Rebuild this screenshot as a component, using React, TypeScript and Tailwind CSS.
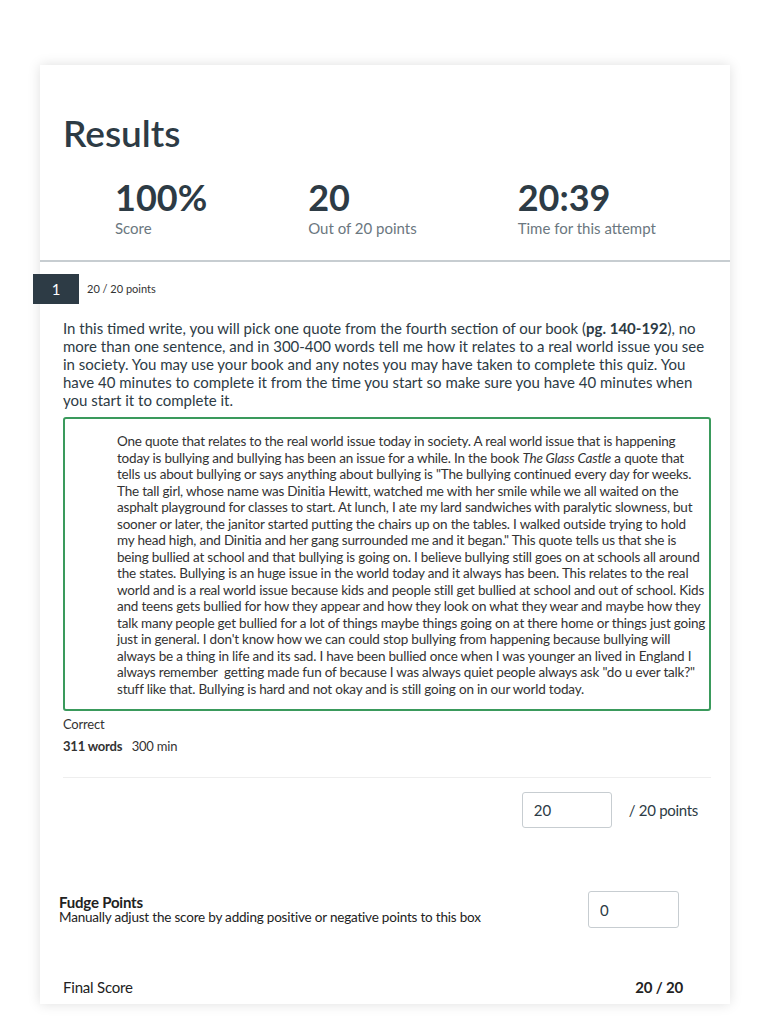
import React from 'react';

const stats = [
  { value: '100%', label: 'Score' },
  { value: '20', label: 'Out of 20 points' },
  { value: '20:39', label: 'Time for this attempt' },
];

const answerLines: React.ReactNode[] = [
  'One quote that relates to the real world issue today in society. A real world issue that is happening',
  <>
    today is bullying and bullying has been an issue for a while. In the book <i>The Glass Castle</i> a quote that
  </>,
  'tells us about bullying or says anything about bullying is "The bullying continued every day for weeks.',
  'The tall girl, whose name was Dinitia Hewitt, watched me with her smile while we all waited on the',
  'asphalt playground for classes to start. At lunch, I ate my lard sandwiches with paralytic slowness, but',
  'sooner or later, the janitor started putting the chairs up on the tables. I walked outside trying to hold',
  'my head high, and Dinitia and her gang surrounded me and it began." This quote tells us that she is',
  'being bullied at school and that bullying is going on. I believe bullying still goes on at schools all around',
  'the states. Bullying is an huge issue in the world today and it always has been. This relates to the real',
  'world and is a real world issue because kids and people still get bullied at school and out of school. Kids',
  'and teens gets bullied for how they appear and how they look on what they wear and maybe how they',
  'talk many people get bullied for a lot of things maybe things going on at there home or things just going',
  "just in general. I don't know how we can could stop bullying from happening because bullying will",
  'always be a thing in life and its sad. I have been bullied once when I was younger an lived in England I',
  'always remember\u00a0 getting made fun of because I was always quiet people always ask "do u ever talk?"',
  'stuff like that. Bullying is hard and not okay and is still going on in our world today.',
];

const App: React.FC = () => {
  return (
    <div className="min-h-[1024px] bg-white pt-[65px] pb-[18px] font-['Lato','Noto_Sans',sans-serif] text-[#2d3b45]">
      <div className="ml-[40px] w-[690px] bg-white shadow-[0_0_12px_rgba(0,0,0,0.13)]">
        {/* results header */}
        <div className="border-b-2 border-[#c7cdd1] px-[23px] pt-[46px] pb-[23px]">
          <h1 className="text-[37px] leading-[43px] font-semibold">Results</h1>
          <div className="mt-[22px] ml-[52px] flex gap-[101px]">
            {stats.map(s => (
              <div key={s.label} className="flex flex-col">
                <span className="text-[36px] leading-[1.2] font-bold">{s.value}</span>
                <span className="text-[15px] leading-[18px] text-[#6b7780]">{s.label}</span>
              </div>
            ))}
          </div>
        </div>

        {/* question */}
        <div className="pl-[23px] pr-[19px] pb-[8px]">
          <div className="-ml-[30px] mt-[12px] flex items-center">
            <div className="flex h-[30px] w-[46px] items-center justify-center bg-[#2d3b45] text-[15px] text-white">1</div>
            <span className="ml-[8px] text-[11px] text-[#333]">20 / 20 points</span>
          </div>

          <div className="mt-[15px] text-[15px] leading-[18px] whitespace-nowrap">
            <div>
              In this timed write, you will pick one quote from the fourth section of our book (<b>pg. 140-192</b>), no
            </div>
            <div>more than one sentence, and in 300-400 words tell me how it relates to a real world issue you see</div>
            <div>in society. You may use your book and any notes you may have taken to complete this quiz. You</div>
            <div>have 40 minutes to complete it from the time you start so make sure you have 40 minutes when</div>
            <div>you start it to complete it.</div>
          </div>

          <div className="mt-[8px] rounded-[3px] border-2 border-[#3a9a5c] pt-[14px] pb-[12px] pl-[52px] pr-[2px]">
            <div className="text-[13.5px] leading-[16.5px] tracking-[-0.2px] whitespace-nowrap text-[#333]">
              {answerLines.map((line, i) => (
                <div key={i}>{line}</div>
              ))}
            </div>
          </div>

          <div className="mt-[2px] text-[13px] leading-[22px] tracking-[-0.2px] text-[#333]">
            <div>Correct</div>
            <div>
              <b>311 words</b>&nbsp;&nbsp; 300 min
            </div>
          </div>

          <div className="mt-[20px] h-px bg-[#eeeeee]" />

          <div className="mt-[14px] flex items-center justify-end gap-[17px] pr-[13px]">
            <input
              type="text"
              defaultValue="20"
              className="h-[36px] w-[90px] rounded-[3px] border border-[#c7cdd1] px-[11px] text-[15px] text-[#2d3b45] outline-none"
            />
            <span className="text-[15px] tracking-[-0.3px] text-[#2d3b45]">/ 20 points</span>
          </div>

          <div className="-ml-[4px] mt-[63px] flex items-center justify-between pr-[32px]">
            <div className="flex flex-col">
              <span className="text-[15px] leading-[14px] font-bold tracking-[-0.2px] text-[#222]">Fudge Points</span>
              <span className="mt-[1px] text-[13.5px] leading-[15px] tracking-[-0.2px] text-[#222]">
                Manually adjust the score by adding positive or negative points to this box
              </span>
            </div>
            <input
              type="text"
              defaultValue="0"
              className="h-[37px] w-[91px] rounded-[3px] border border-[#c7cdd1] px-[11px] text-[15px] text-[#2d3b45] outline-none"
            />
          </div>

          <div className="mt-[50px] flex items-center justify-between pr-[28px] text-[15px] leading-[18px] tracking-[-0.2px] text-[#222]">
            <span>Final Score</span>
            <span className="font-bold">20 / 20</span>
          </div>
        </div>
      </div>
    </div>
  );
};

export default App;
